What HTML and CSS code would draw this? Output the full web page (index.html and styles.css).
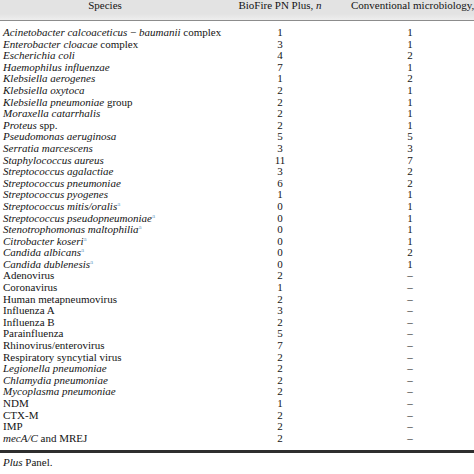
FILE: index.html
```html
<!DOCTYPE html>
<html>
<head>
<meta charset="utf-8">
<link rel="stylesheet" href="styles.css">
</head>
<body>
<div class="page">
<table class="tbl">
<thead>
<tr><th class="c1">Species</th><th class="c2">BioFire PN Plus, <i>n</i></th><th class="c3">Conventional microbiology, <i>n</i></th></tr>
</thead>
<tbody>
<tr class="first"><td><i>Acinetobacter calcoaceticus</i> − <i>baumanii</i> complex</td><td>1</td><td>1</td></tr>
<tr><td><i>Enterobacter cloacae</i> complex</td><td>3</td><td>1</td></tr>
<tr><td><i>Escherichia coli</i></td><td>4</td><td>2</td></tr>
<tr><td><i>Haemophilus influenzae</i></td><td>7</td><td>1</td></tr>
<tr><td><i>Klebsiella aerogenes</i></td><td>1</td><td>2</td></tr>
<tr><td><i>Klebsiella oxytoca</i></td><td>2</td><td>1</td></tr>
<tr><td><i>Klebsiella pneumoniae</i> group</td><td>2</td><td>1</td></tr>
<tr><td><i>Moraxella catarrhalis</i></td><td>2</td><td>1</td></tr>
<tr><td><i>Proteus</i> spp.</td><td>2</td><td>1</td></tr>
<tr><td><i>Pseudomonas aeruginosa</i></td><td>5</td><td>5</td></tr>
<tr><td><i>Serratia marcescens</i></td><td>3</td><td>3</td></tr>
<tr><td><i>Staphylococcus aureus</i></td><td>11</td><td>7</td></tr>
<tr><td><i>Streptococcus agalactiae</i></td><td>3</td><td>2</td></tr>
<tr><td><i>Streptococcus pneumoniae</i></td><td>6</td><td>2</td></tr>
<tr><td><i>Streptococcus pyogenes</i></td><td>1</td><td>1</td></tr>
<tr><td><i>Streptococcus mitis/oralis</i><sup class="fn">a</sup></td><td>0</td><td>1</td></tr>
<tr><td><i>Streptococcus pseudopneumoniae</i><sup class="fn">a</sup></td><td>0</td><td>1</td></tr>
<tr><td><i>Stenotrophomonas maltophilia</i><sup class="fn">a</sup></td><td>0</td><td>1</td></tr>
<tr><td><i>Citrobacter koseri</i><sup class="fn">a</sup></td><td>0</td><td>1</td></tr>
<tr><td><i>Candida albicans</i><sup class="fn">a</sup></td><td>0</td><td>2</td></tr>
<tr><td><i>Candida dublenesis</i><sup class="fn">a</sup></td><td>0</td><td>1</td></tr>
<tr><td>Adenovirus</td><td>2</td><td>–</td></tr>
<tr><td>Coronavirus</td><td>1</td><td>–</td></tr>
<tr><td>Human metapneumovirus</td><td>2</td><td>–</td></tr>
<tr><td>Influenza A</td><td>3</td><td>–</td></tr>
<tr><td>Influenza B</td><td>2</td><td>–</td></tr>
<tr><td>Parainfluenza</td><td>5</td><td>–</td></tr>
<tr><td>Rhinovirus/enterovirus</td><td>7</td><td>–</td></tr>
<tr><td>Respiratory syncytial virus</td><td>2</td><td>–</td></tr>
<tr><td><i>Legionella pneumoniae</i></td><td>2</td><td>–</td></tr>
<tr><td><i>Chlamydia pneumoniae</i></td><td>2</td><td>–</td></tr>
<tr><td><i>Mycoplasma pneumoniae</i></td><td>2</td><td>–</td></tr>
<tr><td>NDM</td><td>1</td><td>–</td></tr>
<tr><td>CTX-M</td><td>2</td><td>–</td></tr>
<tr><td>IMP</td><td>2</td><td>–</td></tr>
<tr class="last"><td><i>mecA/C</i> and MREJ</td><td>2</td><td>–</td></tr>
</tbody>
</table>
<p class="note"><i>Plus</i> Panel.</p>
</div>
</body>
</html>
```
FILE: styles.css
```css
html, body {
  margin: 0;
  padding: 0;
  background: #ffffff;
}
.page {
  width: 474px;
  height: 474px;
  overflow: hidden;
  font-family: "Liberation Serif", "Times New Roman", serif;
  font-size: 11px;
  color: #141414;
}
.tbl {
  width: 480px;
  border-collapse: collapse;
  table-layout: fixed;
  border-bottom: 3px solid #2e2e2e;
}
.tbl th {
  font-weight: normal;
  text-align: center;
  line-height: 11px;
  height: 20px;
  padding: 0 0 9px 0;
  vertical-align: top;
  white-space: nowrap;
  background: linear-gradient(#e3e3e3 0, #e3e3e3 70%, #eeeeee 100%);
  border-bottom: 1px solid #8c8c8c;
  box-sizing: border-box;
}
.c1 { width: 210px; }
.c2 { width: 140px; }
.c3 { width: 130px; }
.tbl th.c3 {
  padding-left: 1px;
  text-align: left;
}
.tbl td {
  padding: 0;
  line-height: 11.6px;
  height: 11.6px;
  white-space: nowrap;
  text-align: center;
}
.tbl td:first-child {
  text-align: left;
  padding-left: 3px;
}
.tbl td:last-child {
  padding-right: 10px;
}
.tbl tr.first td { padding-top: 6px; }
.tbl tr.last td { padding-bottom: 6px; }
.fn {
  font-size: 7px;
  line-height: 0;
  color: #7aa9cc;
  vertical-align: 4px;
}
.note {
  margin: 3px 0 0 3px;
  line-height: 12px;
}
```
